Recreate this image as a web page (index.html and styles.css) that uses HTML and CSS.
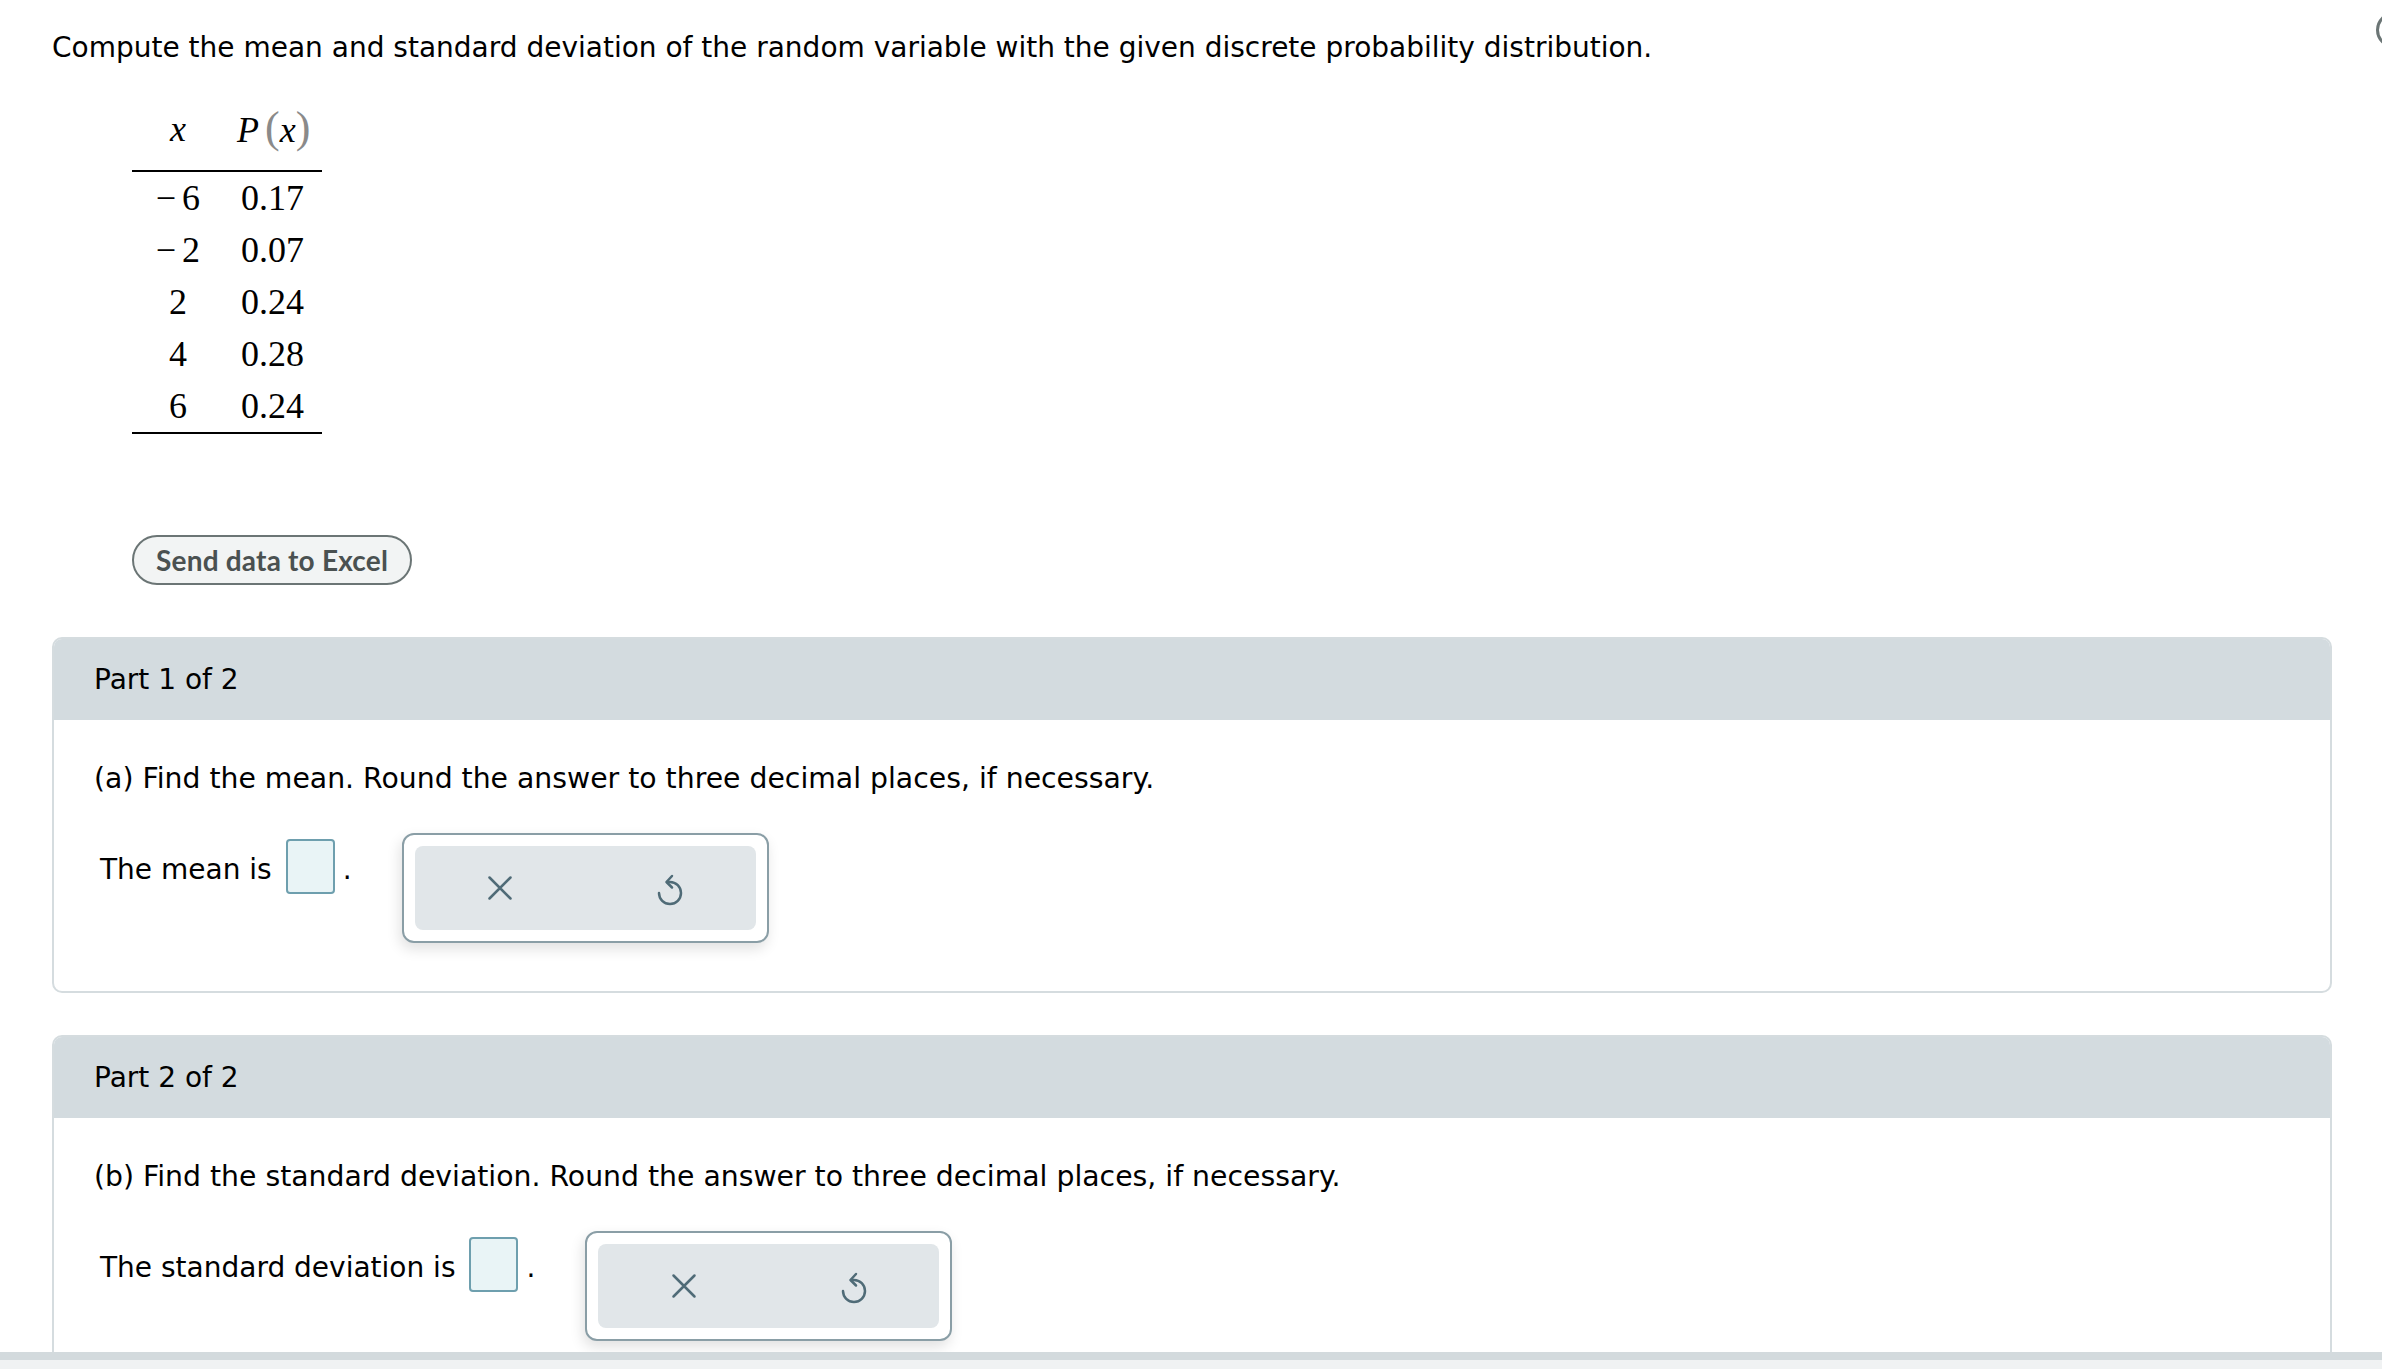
FILE: index.html
```html
<!DOCTYPE html>
<html>
<head>
<meta charset="utf-8">
<link rel="stylesheet" href="styles.css">
</head>
<body>
<div class="help"></div>
<div class="page">
  <p class="prompt">Compute the mean and standard deviation of the random variable with the given discrete probability distribution.</p>
  <table class="dist">
    <thead>
      <tr><th class="cx c"><i>x</i></th><th class="cp"><i>P</i><span class="par lp">(</span><i>x</i><span class="par">)</span></th></tr>
    </thead>
    <tbody>
      <tr><td class="cx"><span class="minus">&minus;</span>6</td><td class="cp">0.17</td></tr>
      <tr><td class="cx"><span class="minus">&minus;</span>2</td><td class="cp">0.07</td></tr>
      <tr><td class="cx c">2</td><td class="cp">0.24</td></tr>
      <tr><td class="cx c">4</td><td class="cp">0.28</td></tr>
      <tr><td class="cx c">6</td><td class="cp">0.24</td></tr>
    </tbody>
  </table>
  <button class="excel">Send data to Excel</button>

  <section class="part">
    <div class="part-head">Part 1 of 2</div>
    <div class="part-body">
      <p class="q">(a) Find the mean. Round the answer to three decimal places, if necessary.</p>
      <div class="answer">
        <span class="label">The mean is</span><span class="box"></span><span class="dot">.</span>
        <div class="keypad">
          <div class="keys">
            <span class="key"><svg width="26" height="26" viewBox="0 0 26 26"><path d="M2.5 2.5 L23.5 23.5 M23.5 2.5 L2.5 23.5" stroke="#4f6b77" stroke-width="2.5" fill="none" stroke-linecap="round"/></svg></span>
            <span class="key"><svg width="30" height="38" viewBox="0 0 30 38"><path d="M12 13 L15 13 A11 11 0 1 1 4 24" stroke="#4f6b77" stroke-width="2.5" fill="none" stroke-linecap="round"/><path d="M17 7 L11.5 13 L17 18.5" stroke="#4f6b77" stroke-width="2.5" fill="none" stroke-linecap="round" stroke-linejoin="round"/></svg></span>
          </div>
        </div>
      </div>
    </div>
  </section>

  <section class="part part2">
    <div class="part-head">Part 2 of 2</div>
    <div class="part-body">
      <p class="q">(b) Find the standard deviation. Round the answer to three decimal places, if necessary.</p>
      <div class="answer">
        <span class="label">The standard deviation is</span><span class="box"></span><span class="dot">.</span>
        <div class="keypad">
          <div class="keys">
            <span class="key"><svg width="26" height="26" viewBox="0 0 26 26"><path d="M2.5 2.5 L23.5 23.5 M23.5 2.5 L2.5 23.5" stroke="#4f6b77" stroke-width="2.5" fill="none" stroke-linecap="round"/></svg></span>
            <span class="key"><svg width="30" height="38" viewBox="0 0 30 38"><path d="M12 13 L15 13 A11 11 0 1 1 4 24" stroke="#4f6b77" stroke-width="2.5" fill="none" stroke-linecap="round"/><path d="M17 7 L11.5 13 L17 18.5" stroke="#4f6b77" stroke-width="2.5" fill="none" stroke-linecap="round" stroke-linejoin="round"/></svg></span>
          </div>
        </div>
      </div>
    </div>
  </section>
</div>
<div class="bottombar"></div>
</body>
</html>
```

FILE: styles.css
```css
html, body {
  margin: 0;
  padding: 0;
  background: #ffffff;
  overflow: hidden;
  height: 1369px;
}
body {
  font-family: "DejaVu Sans", Verdana, sans-serif;
  font-size: 28px;
  color: #000;
  position: relative;
}
.help {
  position: absolute;
  left: 2376px;
  top: 12px;
  width: 30px;
  height: 30px;
  border: 3px solid #6b7575;
  border-radius: 50%;
}
.page {
  padding: 0 50px 0 52px;
}
.prompt {
  margin: 0;
  padding-top: 31px;
  line-height: 34px;
}
.dist {
  margin-top: 29px;
  margin-left: 80px;
  border-collapse: collapse;
  font-family: "Liberation Serif", "Times New Roman", serif;
  font-size: 36px;
}
.dist th {
  font-weight: normal;
  height: 70px;
  vertical-align: middle;
  border-bottom: 2px solid #000;
  padding: 0 0 6px 0;
}
.dist td {
  height: 52px;
  padding: 0;
  line-height: 52px;
}
.dist tbody tr:last-child td { border-bottom: 2px solid #000; }
.dist .cx { width: 68px; text-align: right; }
.dist .cx.c { text-align: center; padding-left: 24px; width: 44px; }
.minus { margin-right: 6px; }
.dist .cp { text-align: left; padding-left: 41px; padding-right: 12px; }
.dist th.cp { padding-left: 37px; }
.par { color: #8a8a8a; font-size: 44px; line-height: 40px; }
.lp { margin-left: 6px; }
.excel {
  display: block;
  margin: 101px 0 0 80px;
  height: 50px;
  padding: 0 22px;
  border: 2px solid #6b7575;
  border-radius: 25px;
  background: #f2f4f4;
  color: #4a5151;
  font-family: Lato, "Open Sans", sans-serif;
  font-weight: 700;
  font-size: 28px;
  letter-spacing: 0.2px;
}
.part {
  margin-top: 52px;
  border: 2px solid #d5dcdf;
  border-radius: 10px;
  overflow: hidden;
}
.part2 { margin-top: 42px; }
.part-head {
  background: #d3dbdf;
  height: 81px;
  display: flex;
  align-items: center;
  padding-left: 40px;
}
.part-body {
  padding: 42px 40px 48px 40px;
}
.q {
  margin: 0;
  line-height: 34px;
  font-size: 28.3px;
}
.answer {
  display: flex;
  align-items: flex-start;
  margin-top: 37px;
}
.label {
  margin-left: 6px;
  margin-top: 20px;
  line-height: 34px;
}
.box {
  width: 45px;
  height: 51px;
  margin-left: 14px;
  margin-top: 6px;
  border: 2px solid #6e9fae;
  border-radius: 4px;
  background: #e9f4f6;
}
.dot {
  margin-left: 8px;
  margin-top: 20px;
  line-height: 34px;
}
.keypad {
  margin-left: 50px;
  width: 367px;
  height: 110px;
  border: 2px solid #8a9ea6;
  border-radius: 12px;
  background: #fff;
  box-shadow: -2px 6px 14px rgba(0,0,0,0.12);
  padding: 11px;
  box-sizing: border-box;
}
.keys {
  display: flex;
  height: 100%;
  background: #e1e6e9;
  border-radius: 8px;
}
.key {
  flex: 1;
  display: flex;
  align-items: center;
  justify-content: center;
}
.bottombar {
  position: absolute;
  left: 0;
  right: 0;
  top: 1352px;
  height: 17px;
  background: #f0f2f3;
  border-top: 8px solid #d3dadd;
  box-sizing: border-box;
}
```
